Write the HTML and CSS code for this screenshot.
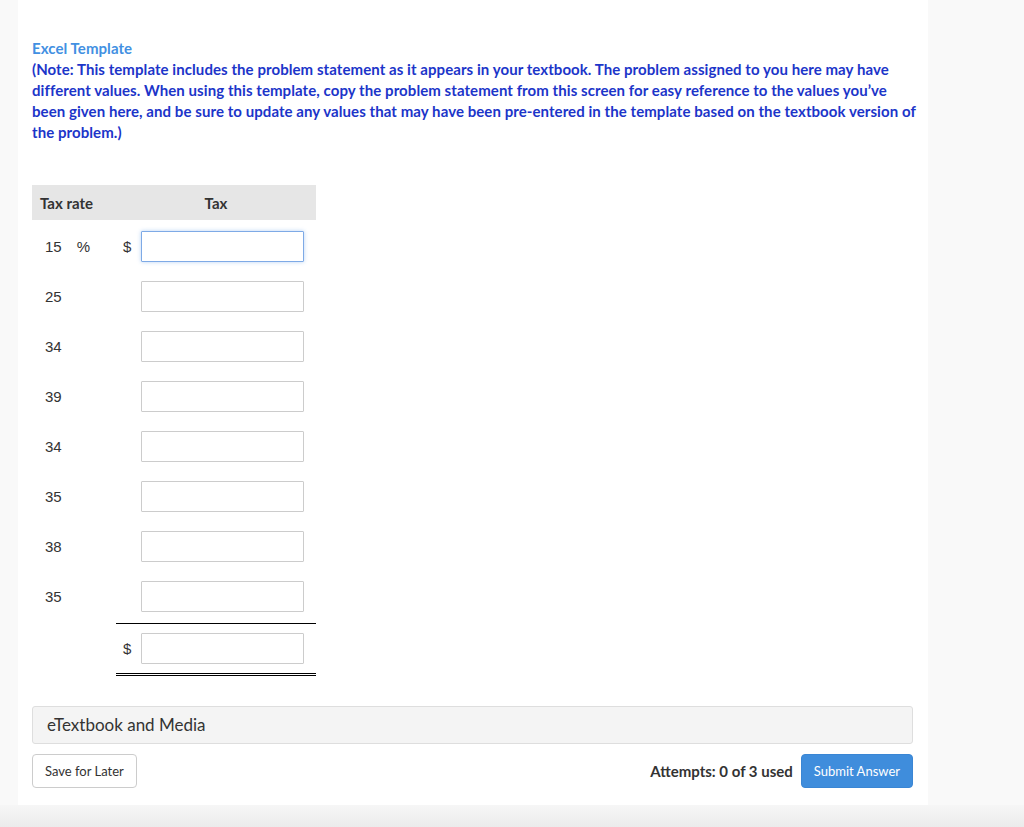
FILE: index.html
```
<!DOCTYPE html>
<html lang="en">
<head>
    <meta charset="UTF-8">
    <meta name="viewport" content="width=device-width, initial-scale=1.0">
    <title>Excel Template</title>
    <link rel="stylesheet" href="styles.css">
</head>
<body>
    <div class="page">
        <div class="question">
            <div class="note">
                <div class="note-title">Excel Template</div>
                <div class="note-text">(Note: This template includes the problem statement as it appears in your textbook. The problem assigned to you here may have different values. When using this template, copy the problem statement from this screen for easy reference to the values you&rsquo;ve been given here, and be sure to update any values that may have been pre-entered in the template based on the textbook version of the problem.)</div>
            </div>

            <table class="tax-table">
                <colgroup>
                    <col class="c-rate">
                    <col class="c-cur">
                    <col class="c-cell">
                </colgroup>
                <thead>
                    <tr>
                        <th class="col-rate">Tax rate</th>
                        <th class="col-tax" colspan="2">Tax</th>
                    </tr>
                </thead>
                <tbody>
                    <tr>
                        <td class="rate">15 <span class="pct">%</span></td>
                        <td class="cur">$</td>
                        <td class="cell"><input type="text" class="answer focused"></td>
                    </tr>
                    <tr>
                        <td class="rate">25</td>
                        <td class="cur"></td>
                        <td class="cell"><input type="text" class="answer"></td>
                    </tr>
                    <tr>
                        <td class="rate">34</td>
                        <td class="cur"></td>
                        <td class="cell"><input type="text" class="answer"></td>
                    </tr>
                    <tr>
                        <td class="rate">39</td>
                        <td class="cur"></td>
                        <td class="cell"><input type="text" class="answer"></td>
                    </tr>
                    <tr>
                        <td class="rate">34</td>
                        <td class="cur"></td>
                        <td class="cell"><input type="text" class="answer"></td>
                    </tr>
                    <tr>
                        <td class="rate">35</td>
                        <td class="cur"></td>
                        <td class="cell"><input type="text" class="answer"></td>
                    </tr>
                    <tr>
                        <td class="rate">38</td>
                        <td class="cur"></td>
                        <td class="cell"><input type="text" class="answer"></td>
                    </tr>
                    <tr class="last-row">
                        <td class="rate">35</td>
                        <td class="cur"></td>
                        <td class="cell"><input type="text" class="answer"></td>
                    </tr>
                    <tr class="total-row">
                        <td class="rate"></td>
                        <td class="cur">$</td>
                        <td class="cell"><input type="text" class="answer"></td>
                    </tr>
                </tbody>
            </table>

            <div class="media-bar">eTextbook and Media</div>

            <div class="actions">
                <button class="btn btn-save">Save for Later</button>
                <div class="submit-group">
                    <span class="attempts">Attempts: 0 of 3 used</span>
                    <button class="btn btn-submit">Submit Answer</button>
                </div>
            </div>
        </div>
        <div class="footer-band"></div>
    </div>
</body>
</html>
```

FILE: styles.css
```
body {
    margin: 0;
    background: #f9f9f9;
    font-family: 'Lato', 'Open Sans', sans-serif;
    color: #333;
}
.page {
    width: 1024px;
    height: 827px;
    overflow: hidden;
}
.question {
    background: #fff;
    width: 910px;
    height: 805px;
    margin-left: 18px;
    padding: 38px 15px 0 14px;
    box-sizing: border-box;
}
.note {
    font-size: 15px;
    line-height: 21px;
    font-weight: bold;
    letter-spacing: 0.07px;
}
.note-title {
    color: #4290e2;
}
.note-text {
    color: #1c35c9;
    width: 885px;
}
.tax-table {
    border-collapse: collapse;
    table-layout: fixed;
    margin-top: 42px;
    width: 284px;
}
.c-rate { width: 84px; }
.c-cur { width: 25px; }
.c-cell { width: 175px; }
.tax-table th {
    background: #e6e6e6;
    height: 35px;
    padding: 0;
    font-size: 15px;
    font-weight: bold;
    color: #333;
}
.col-rate {
    text-align: left;
    padding-left: 8px !important;
}
.col-tax {
    text-align: center;
}
.tax-table td {
    padding: 11px 0 0 0;
    height: 39px;
    vertical-align: top;
    font-family: 'Liberation Sans', Arial, sans-serif;
    font-size: 15px;
    line-height: 31px;
    color: #333;
}
.tax-table td.rate {
    padding-left: 13px;
}
.pct {
    margin-left: 11px;
}
.tax-table td.cur {
    padding-left: 7px;
}
.answer {
    display: block;
    width: 163px;
    height: 31px;
    box-sizing: border-box;
    border: 1px solid #ccc;
    border-radius: 1px;
    font-size: 14px;
    padding: 4px 6px;
    margin: 0;
}
.answer.focused {
    border-color: #7eaae6;
    box-shadow: 0 0 4px rgba(102, 160, 230, 0.45);
}
.last-row td {
    height: 42px;
}
.last-row td.cur,
.last-row td.cell {
    border-bottom: 1px solid #000;
}
.total-row td {
    padding-top: 9px;
    height: 40px;
}
.total-row td.cur,
.total-row td.cell {
    border-bottom: 3px double #000;
}
.media-bar {
    margin-top: 30px;
    height: 38px;
    box-sizing: border-box;
    background: #f4f4f4;
    border: 1px solid #dedede;
    border-radius: 3px;
    padding-left: 14px;
    line-height: 36px;
    font-size: 17px;
    color: #333;
}
.actions {
    display: flex;
    justify-content: space-between;
    align-items: center;
    margin-top: 10px;
}
.submit-group {
    display: flex;
    align-items: center;
    gap: 8px;
}
.attempts {
    font-size: 15px;
    font-weight: bold;
    color: #333;
}
.btn {
    font-family: 'Lato', 'Open Sans', sans-serif;
    font-size: 13px;
    height: 34px;
    border-radius: 4px;
    cursor: pointer;
}
.btn-save {
    background: #fff;
    border: 1px solid #ccc;
    color: #333;
    padding: 0 12px;
}
.btn-submit {
    background: #3f8ddc;
    border: 1px solid #3a86d4;
    color: #fff;
    padding: 0 12px;
}
.footer-band {
    height: 22px;
    background: linear-gradient(to bottom, #f6f6f6, #ebebeb);
}
```
